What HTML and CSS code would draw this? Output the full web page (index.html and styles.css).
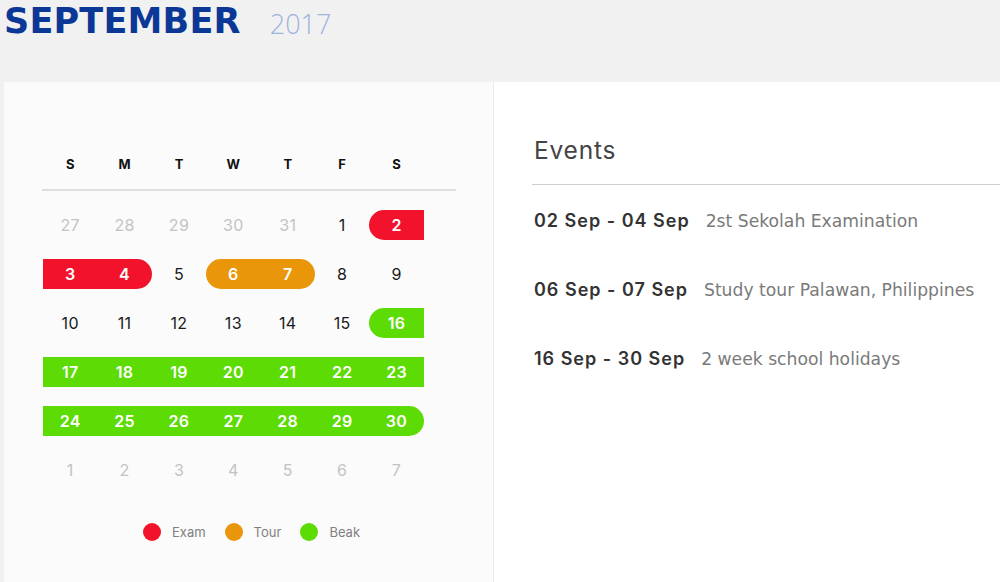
FILE: index.html
```html
<!DOCTYPE html>
<html>
<head>
<meta charset="utf-8">
<link rel="stylesheet" href="styles.css">
</head>
<body>
<header class="top">
  <h1 class="month">SEPTEMBER</h1>
  <span class="year">2017</span>
</header>
<main class="main">
  <section class="cal">
    <div class="head">
      <div class="weekdays">
        <span>S</span><span>M</span><span>T</span><span>W</span><span>T</span><span>F</span><span>S</span>
      </div>
    </div>
    <div class="grid">
      <div class="d out">27</div><div class="d out">28</div><div class="d out">29</div><div class="d out">30</div><div class="d out">31</div><div class="d">1</div><div class="d exam rl">2</div>
      <div class="d exam">3</div><div class="d exam rr">4</div><div class="d">5</div><div class="d tour rl">6</div><div class="d tour rr">7</div><div class="d">8</div><div class="d">9</div>
      <div class="d">10</div><div class="d">11</div><div class="d">12</div><div class="d">13</div><div class="d">14</div><div class="d">15</div><div class="d brk rl">16</div>
      <div class="d brk">17</div><div class="d brk">18</div><div class="d brk">19</div><div class="d brk">20</div><div class="d brk">21</div><div class="d brk">22</div><div class="d brk">23</div>
      <div class="d brk">24</div><div class="d brk">25</div><div class="d brk">26</div><div class="d brk">27</div><div class="d brk">28</div><div class="d brk">29</div><div class="d brk rr">30</div>
      <div class="d out">1</div><div class="d out">2</div><div class="d out">3</div><div class="d out">4</div><div class="d out">5</div><div class="d out">6</div><div class="d out">7</div>
    </div>
    <div class="legend">
      <span class="item"><i class="dot exam"></i>Exam</span>
      <span class="item"><i class="dot tour"></i>Tour</span>
      <span class="item"><i class="dot brk"></i>Beak</span>
    </div>
  </section>
  <section class="events">
    <h2 class="ev-title">Events</h2>
    <ul class="ev-list">
      <li class="ev"><span class="ev-date">02 Sep - 04 Sep</span><span class="ev-desc">2st Sekolah Examination</span></li>
      <li class="ev"><span class="ev-date">06 Sep - 07 Sep</span><span class="ev-desc">Study tour Palawan, Philippines</span></li>
      <li class="ev"><span class="ev-date">16 Sep - 30 Sep</span><span class="ev-desc">2 week school holidays</span></li>
    </ul>
  </section>
</main>
</body>
</html>
```
FILE: styles.css
```css
html, body {
  margin: 0;
  padding: 0;
}
body {
  background: #f1f1f1;
  font-family: Inter, "DejaVu Sans", sans-serif;
  width: 1000px;
  height: 582px;
  overflow: hidden;
}
.top {
  height: 82px;
  display: flex;
  align-items: flex-start;
  padding-left: 4px;
  box-sizing: border-box;
}
.month {
  margin: 0;
  font-family: "DejaVu Sans", sans-serif;
  font-size: 35px;
  font-weight: 700;
  color: #0b3796;
  line-height: 42px;
  letter-spacing: 0.2px;
}
.year {
  margin-left: 29px;
  font-family: "Open Sans", sans-serif;
  font-weight: 300;
  font-size: 27px;
  color: #9fb4dc;
  line-height: 47px;
}
.main {
  display: flex;
  padding-left: 4px;
  height: 500px;
}
.cal {
  width: 490px;
  background: #fbfbfb;
  border-right: 1px solid #ebebeb;
  box-sizing: border-box;
  padding: 67px 0 0 38px;
}
.head {
  width: 414px;
  border-bottom: 2px solid #dedede;
  padding-bottom: 10px;
}
.weekdays {
  display: grid;
  grid-template-columns: repeat(7, 54.4px);
  margin-left: 1px;
  height: 30px;
  line-height: 31px;
  font-size: 13px;
  font-weight: 700;
  color: #111;
  text-align: center;
}
.grid {
  display: grid;
  grid-template-columns: repeat(7, 54.4px);
  grid-auto-rows: 30px;
  row-gap: 19px;
  margin-top: 19px;
  margin-left: 1px;
}
.d {
  text-align: center;
  line-height: 30px;
  font-size: 16px;
  color: #1a1a1a;
  letter-spacing: 0.3px;
}
.d.out { color: #c3c3c3; }
.d.exam, .d.tour, .d.brk { color: #fff; font-weight: 600; }
.exam { background: #f2122b; }
.tour { background: #e9960b; }
.brk { background: #5cdb04; }
.rl { border-radius: 15px 0 0 15px; }
.rr { border-radius: 0 15px 15px 0; }
.legend {
  display: flex;
  margin-top: 38px;
  padding-left: 101px;
  font-size: 13px;
  color: #808080;
}
.item {
  display: flex;
  align-items: center;
  margin-right: 19px;
}
.dot {
  width: 18px;
  height: 18px;
  border-radius: 50%;
  margin-right: 11px;
  display: inline-block;
}
.events {
  flex: 1;
  background: #fff;
  padding: 52px 0 0 38px;
}
.ev-title {
  margin: 0;
  padding-left: 2px;
  font-size: 24.5px;
  font-weight: 400;
  color: #444;
  line-height: 32px;
  letter-spacing: 0.8px;
  padding-bottom: 18px;
  border-bottom: 1px solid #cfcfcf;
}
.ev-list {
  list-style: none;
  margin: 0;
  padding: 23px 0 0 2px;
}
.ev {
  display: flex;
  align-items: baseline;
  height: 69px;
  line-height: 26px;
}
.ev-date {
  font-size: 18px;
  font-weight: 600;
  color: #333;
  letter-spacing: 1px;
  margin-right: 16px;
}
.ev-desc {
  font-family: "DejaVu Sans", sans-serif;
  font-size: 17.2px;
  color: #7a7a7a;
}
```
